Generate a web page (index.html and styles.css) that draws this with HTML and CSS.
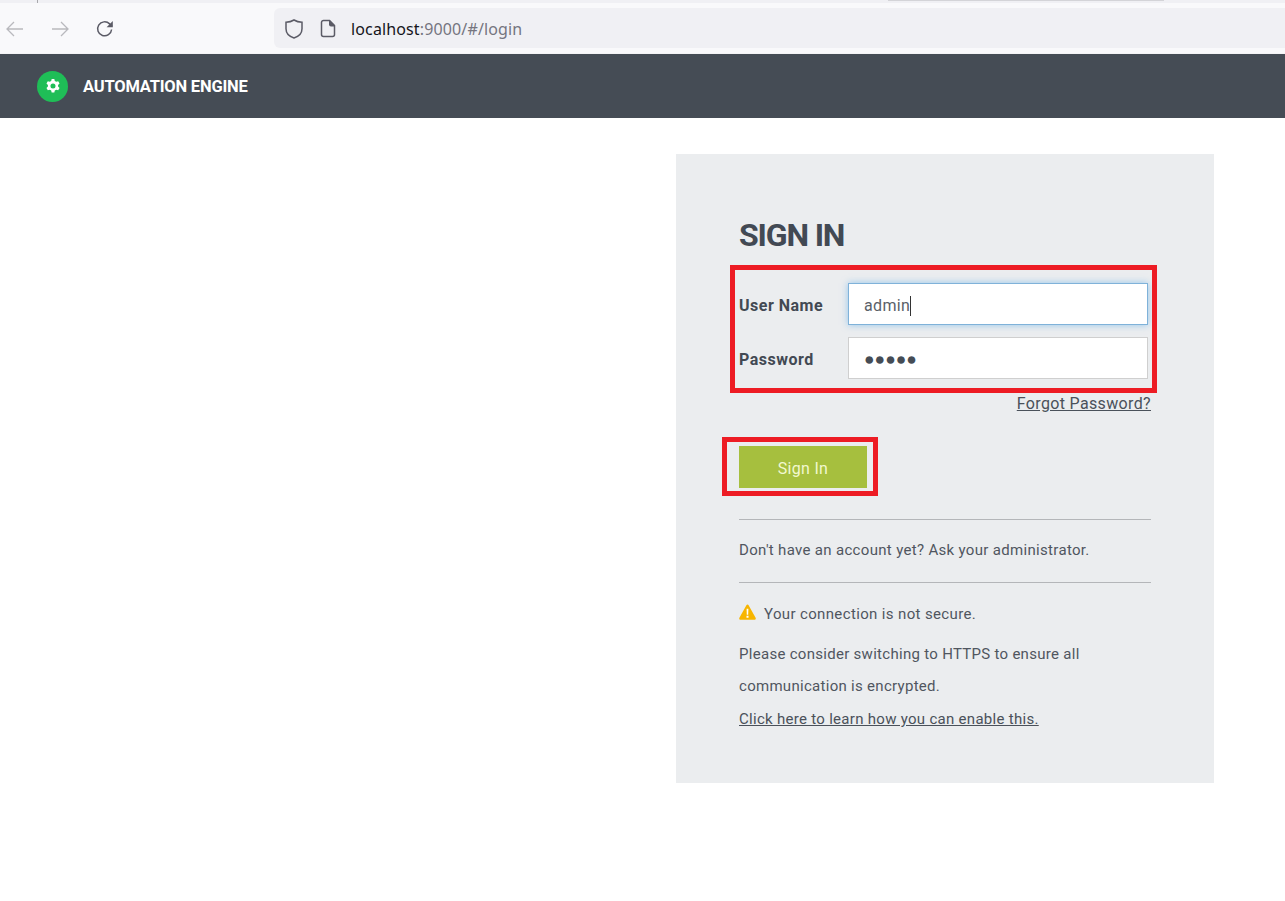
FILE: index.html
```html
<!DOCTYPE html>
<html lang="en">
<head>
<meta charset="utf-8">
<title>Automation Engine</title>
<link rel="stylesheet" href="styles.css">
</head>
<body>
<div class="browser">
  <div class="tabstrip"><span class="tabtick"></span><span class="tabshadow"></span></div>
  <div class="toolbar">
    <svg class="tool back" width="20" height="18" viewBox="0 0 20 18"><path d="M18 9H2M9 2L2 9l7 7"/></svg>
    <svg class="tool forward" width="20" height="18" viewBox="0 0 20 18"><path d="M2 9h16M11 2l7 7-7 7"/></svg>
    <svg class="tool reload" width="20" height="20" viewBox="0 0 20 20"><path d="M16.6 10.5a7 7 0 1 1-2-5.6L17 7.2"/><path class="fill" d="M17.8 2v6.2h-6.2z"/></svg>
    <div class="urlbar">
      <svg class="urlicon" width="20" height="22" viewBox="0 0 20 22"><path d="M10 2c2.4 1.5 5 2.2 8 2.3v6.5c0 4.500-3.200 7.700-8 9.200-4.800-1.500-8-4.700-8-9.200V4.300C5 4.200 7.600 3.500 10 2z"/></svg>
      <svg class="urlicon page" width="16" height="19" viewBox="0 0 16 19"><path d="M3.500 1.500h6l5 5v9a2 2 0 0 1-2 2h-9a2 2 0 0 1-2-2v-12a2 2 0 0 1 2-2z"/><path class="fill" d="M9 1.500h1l4.500 4.500v1.500H11a2 2 0 0 1-2-2z"/></svg>
      <span class="url"><span class="host">localhost</span>:9000/#/login</span>
    </div>
  </div>
</div>
<header class="navbar">
  <span class="logo">
    <svg width="16" height="16" viewBox="0 0 24 24"><path fill-rule="evenodd" d="M10 1.500h4l.7 3 2.200 1.200 2.900-.9 2 3.500-2.200 2.100v2.400l2.200 2.200-2 3.400-2.900-.9-2.200 1.300-.7 3h-4l-.7-3-2.200-1.300-2.900.9-2-3.400 2.200-2.200v-2.400L2.200 8.300l2-3.500 2.900.9 2.200-1.200zM12 8.200a3.800 3.800 0 1 0 0 7.600 3.800 3.800 0 0 0 0-7.600z"/></svg>
  </span>
  <span class="brand">AUTOMATION ENGINE</span>
</header>
<main class="page-body">
  <section class="card">
    <h1 class="title">SIGN IN</h1>
    <div class="fields">
      <label class="field">
        <span class="field-label">User Name</span>
        <span class="input focused">admin<i class="caret"></i></span>
      </label>
      <label class="field">
        <span class="field-label">Password</span>
        <span class="input dots">●●●●●</span>
      </label>
    </div>
    <div class="forgot"><a class="link" href="#">Forgot Password?</a></div>
    <div class="submit"><button class="btn" type="button">Sign In</button></div>
    <hr class="rule rule-a">
    <p class="note">Don't have an account yet? Ask your administrator.</p>
    <hr class="rule rule-b">
    <p class="warning">
      <svg width="17" height="16" viewBox="0 0 17 15" preserveAspectRatio="none"><path class="tri" d="M8.500.5c.5 0 .9.300 1.100.7l7 11.800c.5.800-.1 1.800-1.100 1.800H1.500c-1 0-1.600-1-1.100-1.800l7-11.800c.2-.4.600-.7 1.100-.7z"/><path class="bang" d="M7.600 4.500h1.800l-.2 5.500H7.800zM7.500 11h2v2h-2z"/></svg>
      <span>Your connection is not secure.</span>
    </p>
    <p class="body-copy">Please consider switching to HTTPS to ensure all<br>communication is encrypted.</p>
    <p class="learn"><a class="link" href="#">Click here to learn how you can enable this.</a></p>
  </section>
</main>
</body>
</html>
```
FILE: styles.css
```css
*, *::before, *::after { box-sizing: border-box; }
html, body { margin: 0; padding: 0; }
body { background: #fff; font-family: Roboto, "Liberation Sans", sans-serif; color: #454c55; height: 901px; overflow: hidden; }

.browser { height: 54px; background: #f9f9fb; border-bottom: 1px solid #f4f4f6; }
.tabstrip { height: 3px; background: #f0f0f4; position: relative; }
.tabtick { position: absolute; left: 37px; width: 1px; top: 0; height: 3px; background: #a8a8ac; }
.tabshadow { position: absolute; left: 888px; width: 276px; top: 0; height: 1px; background: #d4d4d8; }
.toolbar { display: flex; align-items: center; height: 50px; padding: 2px 0 0 5px; }
.tool { fill: none; stroke: #b9b9bd; stroke-width: 1.300; flex: none; }
.back { margin-right: 25px; }
.forward { margin-right: 25px; }
.reload { stroke: #5b5b66; stroke-width: 1.500; margin-right: 159px; }
.reload .fill { fill: #5b5b66; stroke: none; }
.urlbar { flex: 1; height: 40px; margin-top: -2px; padding-top: 1px; background: #f0f0f4; border-radius: 6px 0 0 6px; display: flex; align-items: center; padding-left: 10px; }
.urlicon { fill: none; stroke: #5b5b66; stroke-width: 1.500; margin-right: 16px; flex: none; }
.urlicon.page { margin-right: 15px; }
.urlicon .fill { fill: #5b5b66; stroke: none; }
.url { font-family: "Noto Sans", "Open Sans", sans-serif; font-size: 16px; color: #75757f; letter-spacing: 0.130px; }
.host { color: #15141a; }

.navbar { height: 64px; background: #454c55; display: flex; align-items: center; padding-left: 37px; }
.logo { width: 31px; height: 31px; border-radius: 50%; background: #1fbe57; display: flex; align-items: center; justify-content: center; margin-right: 15px; }
.logo svg { fill: #fff; }
.brand { color: #fff; font-weight: 700; font-size: 16.500px; letter-spacing: -0.200px; }

.page-body { padding: 36px 71px 0 676px; }
.card { background: #ebedef; height: 629px; padding: 62px 63px 0; }
.title { margin: 0; font-size: 32px; line-height: 38px; font-weight: 700; letter-spacing: -1.150px; color: #424953; }

.fields { position: relative; margin-top: 11px; padding-top: 18px; height: 128px; }
.fields::after { content: ""; position: absolute; left: -9px; right: -6px; top: 0; bottom: 0; border: 5px solid #ed1c24; pointer-events: none; }
.field { display: flex; align-items: center; height: 42px; margin-bottom: 12px; }
.field-label { width: 109px; padding-top: 3px; font-size: 16px; font-weight: 700; color: #424953; flex: none; letter-spacing: 0.500px; }
.input { width: 300px; height: 42px; margin-right: 3px; background: #fff; border: 1px solid #cfcfcf; display: flex; align-items: center; padding: 3px 0 0 15px; font-size: 16px; letter-spacing: .35px; color: #5a6068; }
.input.focused { border-color: #7fb2d9; box-shadow: 0 0 7px rgba(102, 175, 233, .65); }
.caret { display: inline-block; width: 1px; height: 20px; background: #333; }
.input.dots { font-size: 17.500px; letter-spacing: 0; color: #454c55; padding-left: 15px; }

.forgot { text-align: right; font-size: 16px; line-height: 22px; letter-spacing: .35px; }
.link { color: #4a515a; text-decoration: underline; }

.submit { position: relative; margin-top: 31px; width: 128px; height: 42px; }
.submit::after { content: ""; position: absolute; left: -17px; top: -9px; width: 156px; height: 59px; border: 5px solid #ed1c24; pointer-events: none; }
.btn { display: block; width: 128px; height: 42px; border: 0; background: #a6bf3e; color: #f2f8d0; font-family: inherit; font-size: 16px; letter-spacing: .3px; padding: 2px 0 0; }

.rule { border: 0; border-top: 1px solid #b4b6b9; margin: 0; }
.rule-a { margin-top: 31px; }
.note { margin: 21px 0 0; font-size: 15px; line-height: 18px; letter-spacing: .32px; color: #50565f; }
.rule-b { margin-top: 23px; }
.warning { margin: 21px 0 0; display: flex; align-items: center; font-size: 15px; line-height: 18px; letter-spacing: .36px; color: #50565f; }
.warning svg { margin: 0 8px 4px 0; flex: none; }
.tri { fill: #f7b500; }
.bang { fill: #fff; }
.body-copy { margin: 14px 0 0; font-size: 15px; line-height: 32px; letter-spacing: .29px; color: #50565f; }
.learn { margin: 1px 0 0; font-size: 15px; line-height: 32px; letter-spacing: .29px; }
```
